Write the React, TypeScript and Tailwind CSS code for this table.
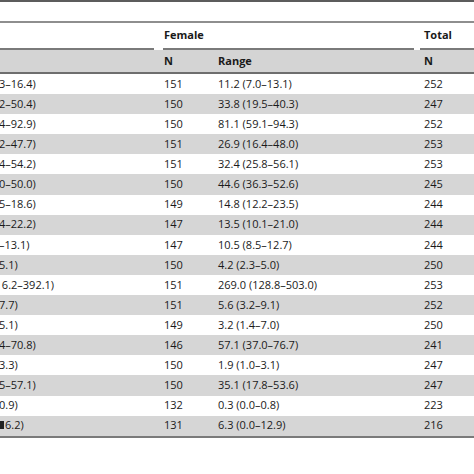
import React from "react";

const rows: [string, string, string, string][] = [
  ["3–16.4)", "151", "11.2 (7.0–13.1)", "252"],
  ["2–50.4)", "150", "33.8 (19.5–40.3)", "247"],
  ["4–92.9)", "150", "81.1 (59.1–94.3)", "252"],
  ["2–47.7)", "151", "26.9 (16.4–48.0)", "253"],
  ["4–54.2)", "151", "32.4 (25.8–56.1)", "253"],
  ["0–50.0)", "150", "44.6 (36.3–52.6)", "245"],
  ["5–18.6)", "149", "14.8 (12.2–23.5)", "244"],
  ["4–22.2)", "147", "13.5 (10.1–21.0)", "244"],
  ["–13.1)", "147", "10.5 (8.5–12.7)", "244"],
  ["5.1)", "150", "4.2 (2.3–5.0)", "250"],
  [" 6.2–392.1)", "151", "269.0 (128.8–503.0)", "253"],
  ["7.7)", "151", "5.6 (3.2–9.1)", "252"],
  ["5.1)", "149", "3.2 (1.4–7.0)", "250"],
  ["4–70.8)", "146", "57.1 (37.0–76.7)", "241"],
  ["3.3)", "150", "1.9 (1.0–3.1)", "247"],
  ["5–57.1)", "150", "35.1 (17.8–53.6)", "247"],
  ["0.9)", "132", "0.3 (0.0–0.8)", "223"],
  ["6.2)", "131", "6.3 (0.0–12.9)", "216"],
];

export default function App() {
  return (
    <div
      className="w-[474px] h-[474px] bg-white overflow-hidden text-[11px] text-[#1a1a1a]"
      style={{ fontFamily: '"Open Sans", "Liberation Sans", sans-serif' }}
    >
      <div className="h-[2px] bg-[#5c5c5c]" />
      <div className="h-[19px]" />
      <div className="h-[2px] bg-[#8e8e8e]" />
      <div className="h-[25px] flex items-center font-bold">
        <div className="w-[164px]" />
        <div className="w-[260px]">Female</div>
        <div>Total</div>
      </div>
      <div className="h-[2px] flex">
        <div className="w-[154px] bg-[#7a7a7a]" />
        <div className="w-[9px]" />
        <div className="w-[251px] bg-[#7a7a7a]" />
        <div className="w-[6px]" />
        <div className="flex-1 bg-[#7a7a7a]" />
      </div>
      <div className="h-[22px] flex items-center font-bold bg-[#d4d4d4]">
        <div className="w-[164px]" />
        <div className="w-[54px]">N</div>
        <div className="w-[206px]">Range</div>
        <div>N</div>
      </div>
      <div className="h-[2px] bg-[#6e6e6e]" />
      {rows.map((r, i) => (
        <div
          key={i}
          className={`h-[20.1px] flex items-center ${i % 2 === 1 ? "bg-[#d6d6d6]" : "bg-white"}`}
        >
          <div className="w-[164px] -ml-[1px] whitespace-pre">
            {i === 17 ? (
              <span>
                <span className="inline-block w-[5px] h-[8px] bg-[#222] mr-[1px]" />
                {r[0]}
              </span>
            ) : (
              r[0]
            )}
          </div>
          <div className="w-[54px] ml-[1px]">{r[1]}</div>
          <div className="w-[206px]">{r[2]}</div>
          <div>{r[3]}</div>
        </div>
      ))}
      <div className="h-[2px] bg-[#7a7a7a]" />
    </div>
  );
}
